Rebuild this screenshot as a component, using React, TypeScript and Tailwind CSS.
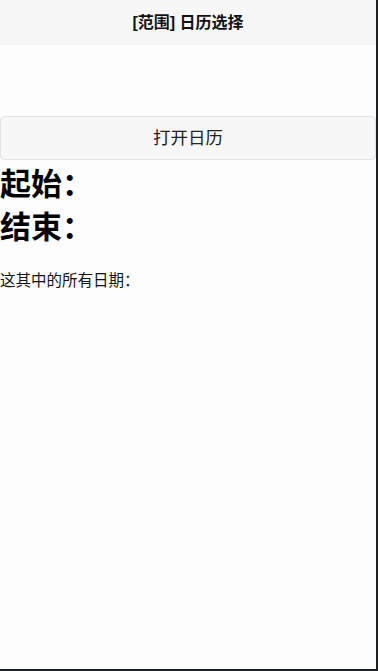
export default function App() {
  return (
    <div
      className="w-[378px] h-[671px] bg-[#1e2124] overflow-hidden"
      style={{ fontFamily: '"Liberation Sans", "Noto Sans CJK SC", sans-serif' }}
    >
      <div className="w-[376px] h-[669px] bg-[#fdfdfd] flex flex-col">
        <div className="h-[45px] bg-[#f8f7f8] flex items-center justify-center">
          <span className="text-[16px] font-bold text-[#111]">[范围] 日历选择</span>
        </div>
        <div className="h-[71px]" />
        <button className="h-[44px] w-full rounded-[4px] border border-[#e4e3e4] bg-[#f8f7f8] text-[17.5px] text-[#222]">
          打开日历
        </button>
        <h1 className="mt-[3px] text-[31px] font-bold leading-[43px] text-black">起始：</h1>
        <h1 className="text-[31px] font-bold leading-[43px] text-black">结束：</h1>
        <p className="mt-[22px] text-[15.5px] leading-[20px] text-[#111]">这其中的所有日期：</p>
      </div>
    </div>
  );
}
